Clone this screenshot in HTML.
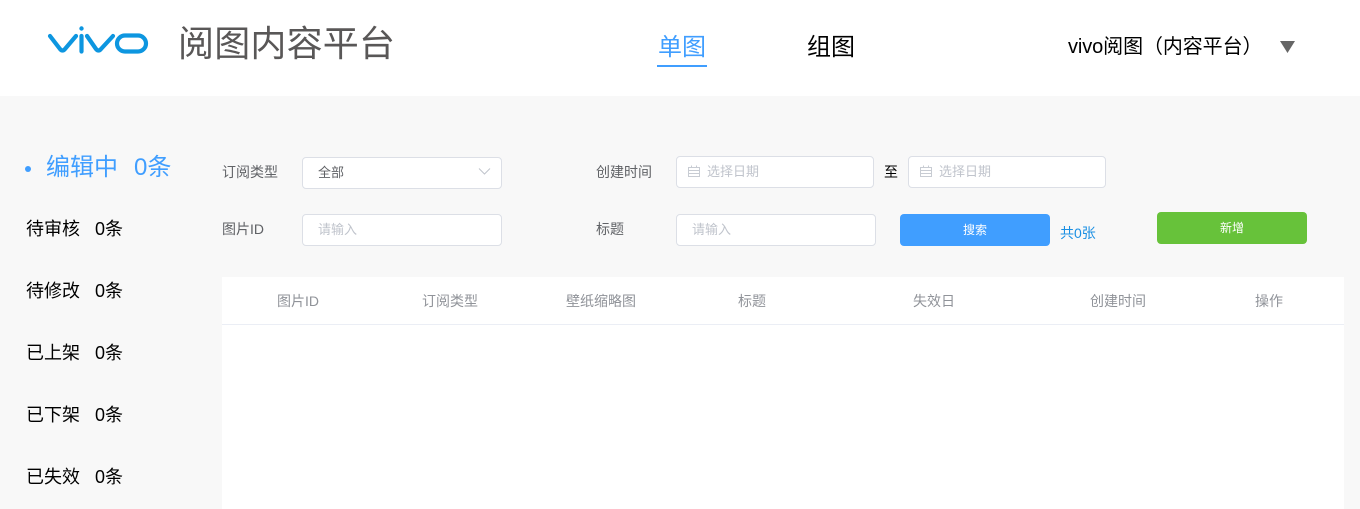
<!DOCTYPE html>
<html lang="zh-CN">
<head>
<meta charset="utf-8">
<title>阅图内容平台</title>
<style>
html,body{margin:0;padding:0;width:1360px;height:509px;overflow:hidden;background:#f8f8f8;font-family:"Liberation Sans","Noto Sans CJK SC",sans-serif;}
.a{position:absolute;white-space:nowrap;line-height:1;}
.box{position:absolute;box-sizing:border-box;background:#fff;border:1px solid #dcdfe6;border-radius:4px;}
.lbl{font-size:14px;color:#606266;}
.ph{font-size:13px;color:#c0c4cc;}
.th{font-size:14px;color:#909399;top:294px;}
.side{font-size:18px;color:#000;left:26px;}
.side span{position:absolute;left:69px;}
</style>
</head>
<body>
<div style="position:absolute;left:0;top:0;width:1360px;height:96px;background:#fff"></div>
<svg style="position:absolute;left:46px;top:24px" width="104" height="32" viewBox="0 0 104 32" fill="none" stroke="#0d96e0" stroke-width="4.200" stroke-linecap="round" stroke-linejoin="round">
<path d="M4 12 L14 25 Q16.500 28 19 25 L30 12"/>
<path d="M35.500 12 V27.500"/>
<path d="M41 12 L50 25 Q52.500 28 55 25 L67 12"/>
<rect x="71" y="11.500" width="29" height="16" rx="8"/>
<circle cx="35.500" cy="4.500" r="2.200" fill="#0d96e0" stroke="none"/>
</svg>
<div class="a" style="left:178px;top:26px;font-size:36px;color:#595757;letter-spacing:.2px">阅图内容平台</div>
<div class="a" style="left:658px;top:36px;font-size:24px;color:#409eff">单图</div>
<div style="position:absolute;left:657px;top:65px;width:50px;height:2px;background:#409eff"></div>
<div class="a" style="left:807px;top:36px;font-size:24px;color:#000">组图</div>
<div class="a" style="left:1068px;top:37px;font-size:20px;color:#000;letter-spacing:-.1px">vivo阅图（内容平台）</div>
<svg style="position:absolute;left:1280px;top:41px" width="15" height="12"><path d="M0 0H15L7.500 12Z" fill="#666"/></svg>

<div style="position:absolute;left:25px;top:166px;width:6px;height:6px;border-radius:3px;background:#409eff"></div>
<div class="a" style="left:46px;top:156px;font-size:24px;color:#409eff">编辑中</div>
<div class="a" style="left:134px;top:156px;font-size:24px;color:#409eff">0条</div>
<div class="a side" style="top:220px">待审核<span>0条</span></div>
<div class="a side" style="top:282px">待修改<span>0条</span></div>
<div class="a side" style="top:344px">已上架<span>0条</span></div>
<div class="a side" style="top:406px">已下架<span>0条</span></div>
<div class="a side" style="top:468px">已失效<span>0条</span></div>

<div class="a lbl" style="left:222px;top:165px">订阅类型</div>
<div class="box" style="left:302px;top:157px;width:200px;height:32px"></div>
<div class="a" style="left:318px;top:166px;font-size:13px;color:#606266">全部</div>
<svg style="position:absolute;left:478px;top:167px" width="13" height="9" fill="none" stroke="#c0c4cc"><path d="M1 1.500L6.500 7L12 1.500"/></svg>

<div class="a lbl" style="left:596px;top:165px">创建时间</div>
<div class="box" style="left:676px;top:156px;width:198px;height:32px"></div>
<svg style="position:absolute;left:688px;top:165px" width="12" height="12" fill="none" stroke="#c8ccd3"><path d="M.5 2.500H11.500V11.500H.5ZM.5 5.500H11.500M.5 8.500H11.500M3.500 .5V2.500M8.500 .5V2.500"/></svg>
<div class="a ph" style="left:707px;top:165px">选择日期</div>
<div class="a" style="left:884px;top:165px;font-size:14px;color:#000">至</div>
<div class="box" style="left:908px;top:156px;width:198px;height:32px"></div>
<svg style="position:absolute;left:920px;top:165px" width="12" height="12" fill="none" stroke="#c8ccd3"><path d="M.5 2.500H11.500V11.500H.5ZM.5 5.500H11.500M.5 8.500H11.500M3.500 .5V2.500M8.500 .5V2.500"/></svg>
<div class="a ph" style="left:939px;top:165px">选择日期</div>

<div class="a lbl" style="left:222px;top:222px">图片ID</div>
<div class="box" style="left:302px;top:214px;width:200px;height:32px"></div>
<div class="a ph" style="left:318px;top:223px">请输入</div>
<div class="a lbl" style="left:596px;top:222px">标题</div>
<div class="box" style="left:676px;top:214px;width:200px;height:32px"></div>
<div class="a ph" style="left:692px;top:223px">请输入</div>
<div style="position:absolute;left:900px;top:214px;width:150px;height:32px;background:#409eff;border-radius:4px"></div>
<div class="a" style="left:963px;top:224px;font-size:12px;color:#fff">搜索</div>
<div class="a" style="left:1060px;top:226px;font-size:14px;color:#1a8fe3">共0张</div>
<div style="position:absolute;left:1157px;top:212px;width:150px;height:32px;background:#67c23a;border-radius:4px"></div>
<div class="a" style="left:1220px;top:222px;font-size:12px;color:#fff">新增</div>

<div style="position:absolute;left:222px;top:277px;width:1122px;height:232px;background:#fff"></div>
<div style="position:absolute;left:222px;top:324px;width:1122px;height:1px;background:#ebeef5"></div>
<div class="a th" style="left:277px">图片ID</div>
<div class="a th" style="left:422px">订阅类型</div>
<div class="a th" style="left:566px">壁纸缩略图</div>
<div class="a th" style="left:738px">标题</div>
<div class="a th" style="left:913px">失效日</div>
<div class="a th" style="left:1090px">创建时间</div>
<div class="a th" style="left:1255px">操作</div>
</body>
</html>
